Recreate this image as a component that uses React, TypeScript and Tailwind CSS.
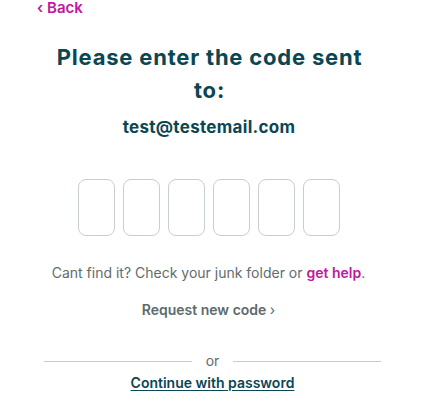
import { useState } from "react"

const font = { fontFamily: "Inter, 'Liberation Sans', sans-serif" }

export default function App() {
  const [code, setCode] = useState(["", "", "", "", "", ""])

  const update = (i: number, v: string) => {
    const next = [...code]
    next[i] = v.replace(/\D/g, "").slice(-1)
    setCode(next)
  }

  return (
    <div className="min-h-screen bg-white" style={font}>
      {/* Back link */}
      <div className="pl-[37px] -mt-[5px]">
        <a href="#" className="text-[15px] font-semibold leading-[20px] text-[#c2179e]">
          ‹ Back
        </a>
      </div>

      <div className="pl-[44px] pr-[57px] flex flex-col items-center">
        <h1 className="mt-[22px] mr-[6px] text-center text-[22px] font-bold leading-[33px] tracking-[0.8px] text-[#0b4653] px-[6px]">
          Please enter the code sent to:
        </h1>
        <p className="mt-[7px] mr-[7px] text-[17px] font-bold leading-[26px] tracking-[0.3px] text-[#0b4653]">
          test@testemail.com
        </p>

        {/* Code inputs */}
        <div className="mt-[39px] mr-[8px] flex gap-[8px]">
          {code.map((c, i) => (
            <input
              key={i}
              value={c}
              onChange={(e) => update(i, e.target.value)}
              inputMode="numeric"
              className="w-[37px] h-[57px] rounded-[8px] border border-[#c8ced0] text-center text-xl text-[#0b4653] focus:outline-none"
            />
          ))}
        </div>

        <p className="mt-[27px] mr-[8px] text-[14px] leading-[20px] text-[#5f6c6c]">
          Cant find it? Check your junk folder or{" "}
          <a href="#" className="font-semibold text-[#c2179e]">
            get help
          </a>
          .
        </p>

        <button className="mt-[17px] mr-[8px] text-[14px] font-semibold leading-[20px] text-[#5b6a6a]">
          Request new code <span className="font-normal">›</span>
        </button>

        {/* Divider */}
        <div className="mt-[31px] w-full flex items-center gap-[14px]">
          <div className="flex-1 h-px bg-[#c7cbcb]" />
          <span className="text-[14px] leading-[20px] text-[#5f6c6c]">or</span>
          <div className="flex-1 h-px bg-[#c7cbcb]" />
        </div>

        <a href="#" className="mt-[2px] text-[14px] font-semibold leading-[20px] text-[#0b4653] underline underline-offset-2">
          Continue with password
        </a>
      </div>
    </div>
  )
}
